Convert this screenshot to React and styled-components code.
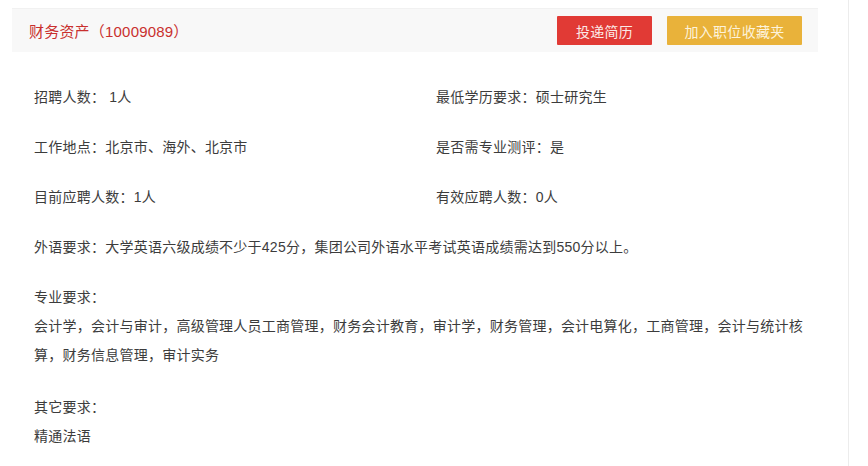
import React from "react";
import styled, { createGlobalStyle } from "styled-components";

const GlobalStyle = createGlobalStyle`
  html, body {
    margin: 0;
    padding: 0;
    background: #fff;
  }
  body {
    font-family: "Liberation Sans", "Noto Sans CJK SC", sans-serif;
    color: #3c3c3c;
  }
`;

const Page = styled.div`
  display: flex;
  min-height: 466px;
`;

const Main = styled.div`
  width: 836px;
  padding: 8px 0 0 12px;
  border-right: 1px solid #ececec;
`;

const Header = styled.div`
  width: 806px;
  height: 44px;
  box-sizing: border-box;
  display: flex;
  align-items: center;
  padding: 0 16px 0 17px;
  background: #f8f8f8;
  border-top: 1px solid #f1f1f1;
`;

const Title = styled.h2`
  flex: 1;
  margin: 0;
  font-size: 15px;
  font-weight: normal;
  color: #c9302e;
  letter-spacing: 0.2px;
`;

const Button = styled.button`
  height: 29px;
  padding: 0;
  width: ${(p) => p.$w}px;
  margin-left: ${(p) => p.$gap || 0}px;
  border: none;
  border-radius: 1px;
  background: ${(p) => p.$bg};
  color: ${(p) => p.$fg};
  font-family: inherit;
  font-size: 14px;
  letter-spacing: 0.3px;
  cursor: pointer;
`;

const Body = styled.div`
  padding: 35px 0 0 22px;
  font-size: 14px;
  letter-spacing: 0.24px;
`;

const Grid = styled.div`
  display: grid;
  grid-template-columns: 402px 1fr;
  row-gap: 30px;
  line-height: 20px;
`;

const Line = styled.div`
  line-height: 20px;
  margin-top: 30px;
`;

const Section = styled.div`
  margin-top: ${(p) => p.$top}px;
`;

const Label = styled.div`
  line-height: 20px;
  margin-bottom: 5px;
`;

const Text = styled.div`
  width: 770px;
  line-height: 29px;
`;

const fields = [
  ["招聘人数：", " 1人"],
  ["最低学历要求：", "硕士研究生"],
  ["工作地点：", "北京市、海外、北京市"],
  ["是否需专业测评：", "是"],
  ["目前应聘人数：", "1人"],
  ["有效应聘人数：", "0人"],
];

const App = () => {
  return (
    <Page>
      <GlobalStyle />
      <Main>
        <Header>
          <Title>财务资产（10009089）</Title>
          <Button $w={95} $bg="#e13a35" $fg="#fbe9e7">
            投递简历
          </Button>
          <Button $w={135} $gap={15} $bg="#e9b23a" $fg="#fdf3dc">
            加入职位收藏夹
          </Button>
        </Header>
        <Body>
          <Grid>
            {fields.map(([k, v]) => (
              <div key={k}>
                {k}
                {v}
              </div>
            ))}
          </Grid>
          <Line>外语要求：大学英语六级成绩不少于425分，集团公司外语水平考试英语成绩需达到550分以上。</Line>
          <Section $top={30}>
            <Label>专业要求：</Label>
            <Text>
              会计学，会计与审计，高级管理人员工商管理，财务会计教育，审计学，财务管理，会计电算化，工商管理，会计与统计核算，财务信息管理，审计实务
            </Text>
          </Section>
          <Section $top={27}>
            <Label>其它要求：</Label>
            <Text>精通法语</Text>
          </Section>
        </Body>
      </Main>
    </Page>
  );
};

export default App;
